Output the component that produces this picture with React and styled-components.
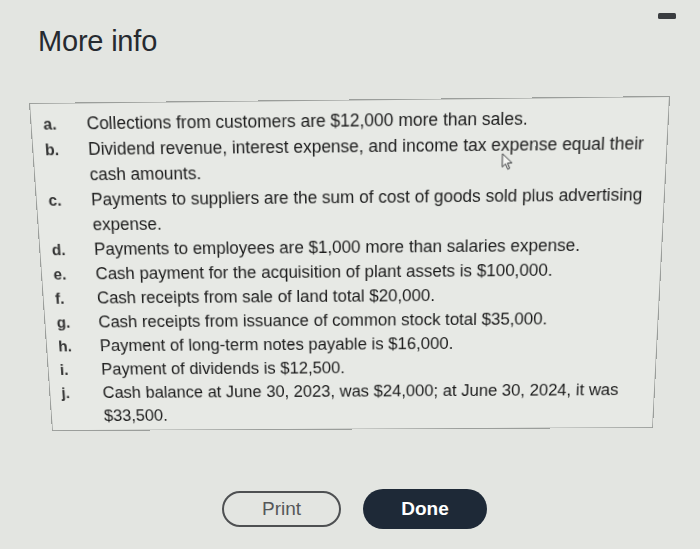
import React from "react";
import styled, { createGlobalStyle } from "styled-components";

const GlobalStyle = createGlobalStyle`
  html, body {
    margin: 0;
    padding: 0;
    background: #e3e5e1;
  }
  body {
    font-family: "Liberation Sans", Arial, Helvetica, sans-serif;
  }
`;

const Page = styled.div`
  position: relative;
  width: 700px;
  height: 549px;
  box-sizing: border-box;
  padding: 13px 24px 0 29px;
  overflow: hidden;
  background: #e3e5e1;
`;

const Header = styled.header`
  display: flex;
  justify-content: space-between;
  align-items: flex-start;
`;

const Title = styled.h1`
  margin: 11px 0 0 9px;
  font-size: 29px;
  line-height: 34px;
  font-weight: 400;
  color: #262a30;
  letter-spacing: -0.2px;
`;

const MinimizeBar = styled.div`
  width: 18px;
  height: 6px;
  border-radius: 1.5px;
  background: #3a3d40;
`;

const Panel = styled.section`
  position: relative;
  margin-top: 45px;
  width: 641px;
  height: 350px;
  box-sizing: border-box;
  border: 1px solid #9b9e9b;
  background: #e7e9e5;
  padding: 7px 3px 3px 12px;
  transform-origin: 0 0;
  transform: matrix3d(
    0.98855, -0.010796, 0, -0.000017863,
    0.070066, 0.999211, 0, 0.000189234,
    0, 0, 1, 0,
    0, 0, 0, 1
  );
`;

const List = styled.ol`
  list-style: none;
  margin: 0;
  padding: 0;
`;

const Item = styled.li`
  display: flex;
  align-items: baseline;
  font-size: 17.5px;
  line-height: 26px;
  color: #1c1c1c;
`;

const Marker = styled.span`
  flex: 0 0 44px;
  font-size: 16px;
  line-height: 20px;
  font-weight: 700;
  color: #333333;
`;

const ItemText = styled.span`
  flex: 1;
`;

const Pointer = styled.svg`
  position: absolute;
  left: 474px;
  top: 54px;
  width: 12px;
  height: 18px;
`;

const Footer = styled.footer`
  display: flex;
  align-items: center;
  gap: 22px;
  margin-top: 36px;
  padding-left: 193px;
`;

const Button = styled.button`
  box-sizing: border-box;
  font-family: inherit;
  font-size: 19px;
  border-radius: 999px;
  cursor: pointer;
  padding: 0;
  height: ${(p) => (p.$primary ? 40 : 36)}px;
  width: ${(p) => (p.$primary ? 124 : 119)}px;
  background: ${(p) => (p.$primary ? "#1e2937" : "transparent")};
  color: ${(p) => (p.$primary ? "#ffffff" : "#555759")};
  border: ${(p) => (p.$primary ? "none" : "2px solid #4e5052")};
  font-weight: ${(p) => (p.$primary ? 700 : 400)};
`;

const items = [
  ["a.", "Collections from customers are $12,000 more than sales."],
  ["b.", "Dividend revenue, interest expense, and income tax expense equal their cash amounts."],
  ["c.", "Payments to suppliers are the sum of cost of goods sold plus advertising expense."],
  ["d.", "Payments to employees are $1,000 more than salaries expense."],
  ["e.", "Cash payment for the acquisition of plant assets is $100,000."],
  ["f.", "Cash receipts from sale of land total $20,000."],
  ["g.", "Cash receipts from issuance of common stock total $35,000."],
  ["h.", "Payment of long-term notes payable is $16,000."],
  ["i.", "Payment of dividends is $12,500."],
  ["j.", "Cash balance at June 30, 2023, was $24,000; at June 30, 2024, it was $33,500."],
];

export default function App() {
  return (
    <>
      <GlobalStyle />
      <Page>
        <Header>
          <Title>More info</Title>
          <MinimizeBar />
        </Header>
        <Panel>
          <List>
            {items.map(([m, t]) => (
              <Item key={m}>
                <Marker>{m}</Marker>
                <ItemText>{t}</ItemText>
              </Item>
            ))}
          </List>
          <Pointer viewBox="0 0 12 18">
            <path
              d="M1 1 L1 14.5 L4.3 11.4 L6.6 16.8 L8.6 15.9 L6.3 10.6 L10.8 10.4 Z"
              fill="#f4f5f2"
              stroke="#3a3c3e"
              strokeWidth="1"
              strokeLinejoin="round"
            />
          </Pointer>
        </Panel>
        <Footer>
          <Button>Print</Button>
          <Button $primary>Done</Button>
        </Footer>
      </Page>
    </>
  );
}
